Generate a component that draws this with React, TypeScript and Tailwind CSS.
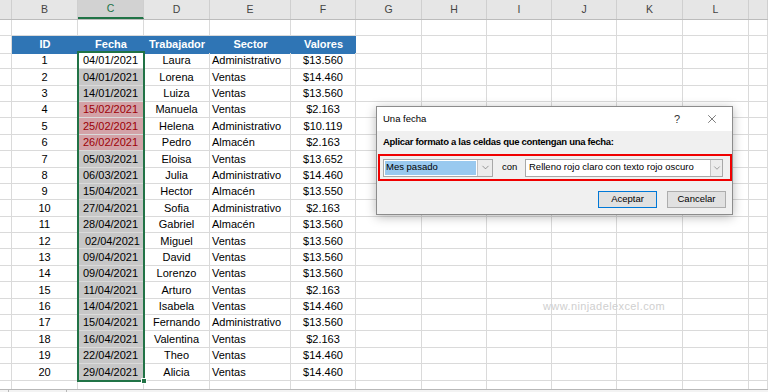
import { ChevronDown, X } from "lucide-react";

const GRID =
  "grid grid-cols-[12px_66px_66px_66px_81px_65px_66px_65px_65px_65px_66px_66px_1fr]";

const letters = ["", "B", "C", "D", "E", "F", "G", "H", "I", "J", "K", "L", ""];

const rows: [number, string, string, string, string][] = [
  [1, "04/01/2021", "Laura", "Administrativo", "$13.560"],
  [2, "04/01/2021", "Lorena", "Ventas", "$14.460"],
  [3, "14/01/2021", "Luiza", "Ventas", "$13.560"],
  [4, "15/02/2021", "Manuela", "Ventas", "$2.163"],
  [5, "25/02/2021", "Helena", "Administrativo", "$10.119"],
  [6, "26/02/2021", "Pedro", "Almacén", "$2.163"],
  [7, "05/03/2021", "Eloisa", "Ventas", "$13.652"],
  [8, "06/03/2021", "Julia", "Administrativo", "$14.460"],
  [9, "15/04/2021", "Hector", "Almacén", "$13.550"],
  [10, "27/04/2021", "Sofia", "Administrativo", "$2.163"],
  [11, "28/04/2021", "Gabriel", "Almacén", "$13.560"],
  [12, "02/04/2021", "Miguel", "Ventas", "$13.560"],
  [13, "09/04/2021", "David", "Ventas", "$13.560"],
  [14, "09/04/2021", "Lorenzo", "Ventas", "$13.560"],
  [15, "11/04/2021", "Arturo", "Ventas", "$2.163"],
  [16, "14/04/2021", "Isabela", "Ventas", "$14.460"],
  [17, "15/04/2021", "Fernando", "Administrativo", "$13.560"],
  [18, "16/04/2021", "Valentina", "Ventas", "$2.163"],
  [19, "22/04/2021", "Theo", "Ventas", "$14.460"],
  [20, "29/04/2021", "Alicia", "Ventas", "$14.460"],
];

const cell = "border-r border-b border-[#dadada] flex items-center overflow-hidden whitespace-nowrap";

function EmptyCells({ n }: { n: number }) {
  return (
    <>
      {Array.from({ length: n }).map((_, i) => (
        <div key={i} className={cell} />
      ))}
    </>
  );
}

function Dialog() {
  return (
    <div className="absolute left-[376px] top-[106px] w-[357px] h-[109px] border border-[#8c8c8c] bg-[#f0f0f0] shadow-[0_2px_10px_rgba(0,0,0,0.28)] flex flex-col text-[9.5px] text-black">
      <div className="h-[24px] bg-white flex items-center justify-between pl-[6px] pr-[13px]">
        <span>Una fecha</span>
        <div className="flex items-center gap-[25px]">
          <span className="text-[11px] text-[#333]">?</span>
          <X size={14} strokeWidth={1.1} className="text-[#333]" />
        </div>
      </div>
      <div className="h-[23px] flex items-center pl-[6px] font-bold tracking-[-0.3px]">
        Aplicar formato a las celdas que contengan una fecha:
      </div>
      <div className="h-[27px] ml-[1px] border-2 border-[#f00000] flex items-center pl-[3px] pr-[7px]">
        <div className="w-[110px] h-[18px] border border-[#a8a8a8] bg-white flex">
          <div className="flex-1 p-[1px]">
            <div className="h-full bg-[#99c9ef] flex items-center pl-[1px]">Mes pasado</div>
          </div>
          <div className="w-[15px] border-l border-[#c4c4c4] bg-[#ececec] flex items-center justify-center">
            <ChevronDown size={11} strokeWidth={1.4} className="text-[#666]" />
          </div>
        </div>
        <span className="ml-[9px] w-[23px]">con</span>
        <div className="flex-1 h-[18px] border border-[#a8a8a8] bg-white flex">
          <div className="flex-1 flex items-center pl-[3px] whitespace-nowrap">
            Relleno rojo claro con texto rojo oscuro
          </div>
          <div className="w-[12px] border-l border-[#c4c4c4] bg-[#ececec] flex items-center justify-center">
            <ChevronDown size={10} strokeWidth={1.4} className="text-[#666]" />
          </div>
        </div>
      </div>
      <div className="mt-[10px] h-[17px] flex justify-end gap-[10px] pr-[6px]">
        <button className="w-[59px] h-[17px] border border-[#0078d7] bg-[#e1e1e1] flex items-center justify-center">
          Aceptar
        </button>
        <button className="w-[59px] h-[17px] border border-[#adadad] bg-[#e1e1e1] flex items-center justify-center">
          Cancelar
        </button>
      </div>
    </div>
  );
}

export default function App() {
  return (
    <div className="relative w-[768px] h-[392px] overflow-hidden bg-white font-['Liberation_Sans',Arial,sans-serif] text-[11px] text-black flex flex-col">
      {/* column letters */}
      <div className={`${GRID} h-[20px] bg-[#e6e6e6] border-b border-[#bcbcbc] shrink-0`}>
        {letters.map((l, i) => (
          <div
            key={i}
            className={`flex items-center justify-center border-r border-[#cfcfcf] text-[10.5px] ${
              l === "C"
                ? "bg-[#d2d2d2] text-[#217346] border-b-2 border-b-[#217346]"
                : "text-[#444]"
            }`}
          >
            {l}
          </div>
        ))}
      </div>

      {/* blank row */}
      <div className={`${GRID} h-[16.4px] shrink-0`}>
        <EmptyCells n={13} />
      </div>

      {/* table header */}
      <div className={`${GRID} h-[16.4px] shrink-0`}>
        <div className={cell} />
        {["ID", "Fecha", "Trabajador", "Sector", "Valores"].map((h) => (
          <div
            key={h}
            className="bg-[#2f75b5] text-white font-bold flex items-center justify-center border-b border-[#2f75b5]"
          >
            {h}
          </div>
        ))}
        <EmptyCells n={7} />
      </div>

      {rows.map(([id, fecha, nombre, sector, valor], idx) => {
        const red = id >= 4 && id <= 6;
        const fill = idx === 0 ? "bg-white" : red ? "bg-[#d3a2a7] text-[#9c0006]" : "bg-[#c7c7c7]";
        return (
          <div key={id} className={`${GRID} h-[16.4px] shrink-0`}>
            <div className={cell} />
            <div className={`${cell} justify-center`}>{id}</div>
            <div className={`${cell} ${fill} ${id === 12 ? "justify-end pr-[3px]" : "justify-center"}`}>
              {fecha}
            </div>
            <div className={`${cell} justify-center`}>{nombre}</div>
            <div className={`${cell} pl-[2px]`}>{sector}</div>
            <div className={`${cell} justify-center`}>{valor}</div>
            <EmptyCells n={7} />
          </div>
        );
      })}

      {/* partial row below the table */}
      <div className={`${GRID} flex-1`}>
        {Array.from({ length: 13 }).map((_, i) => (
          <div key={i} className="border-r border-[#dadada]" />
        ))}
      </div>

      {/* sheet tab strip edge */}
      <div className="h-[3px] shrink-0 border-t border-[#b8b8b8] bg-[#f3f3f3] flex">
        <div className="w-[9px] border-r border-[#b8b8b8]" />
        <div className="ml-[57px] w-[40px] border-l border-[#b8b8b8]" />
      </div>

      {/* selection around column C */}
      <div className="absolute left-[77px] top-[51px] w-[68px] h-[331px] border-2 border-[#217346] pointer-events-none" />
      <div className="absolute left-[141px] top-[378px] w-[6px] h-[6px] bg-[#217346] border border-white" />

      {/* watermark */}
      <div className="absolute left-[543px] top-[298px] text-[11px] tracking-[0.4px] text-[#cfcfcf]">
        www.ninjadelexcel.com
      </div>

      <Dialog />
    </div>
  );
}
